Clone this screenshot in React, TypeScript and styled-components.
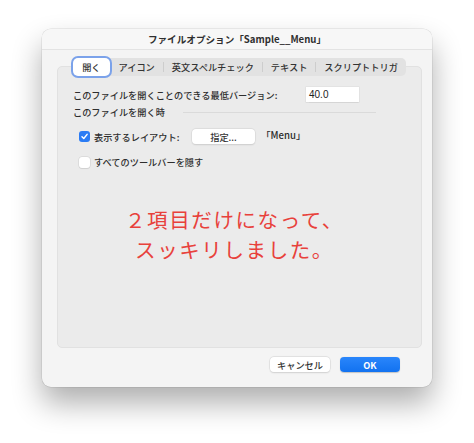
import React from "react";
import styled, { createGlobalStyle } from "styled-components";

const Global = createGlobalStyle`
  html, body { margin: 0; padding: 0; background: #ffffff; }
  body {
    font-family: "Noto Sans CJK JP", "Noto Sans", "Liberation Sans", sans-serif;
    color: #2a2a2a;
    -webkit-font-smoothing: antialiased;
  }
`;

const Page = styled.div`
  width: 474px;
  height: 443px;
  box-sizing: border-box;
  padding: 29px 0 0 42px;
`;

const Window = styled.div`
  width: 390px;
  height: 358px;
  display: flex;
  flex-direction: column;
  background: #f4f4f4;
  border-radius: 9px;
  box-shadow: 0 16px 30px rgba(0, 0, 0, 0.32), 0 0 0 0.5px rgba(0, 0, 0, 0.12);
  overflow: hidden;
`;

const TitleBar = styled.div`
  height: 20px;
  flex: none;
  display: flex;
  align-items: center;
  justify-content: center;
  background: #f7f7f7;
  border-bottom: 1px solid #e3e3e3;
  font-size: 9.6px;
  font-weight: 700;
  color: #2f2f2f;
`;

const Body = styled.div`
  flex: 1;
  display: flex;
  flex-direction: column;
  padding: 8px 10px 0 15px;
  min-height: 0;
`;

const TabBar = styled.div`
  align-self: center;
  display: flex;
  align-items: center;
  height: 18px;
  background: #e2e2e2;
  border-radius: 5px;
  position: relative;
  z-index: 1;
  margin-bottom: -10px;
`;

const Tab = styled.div<{ $active?: boolean }>`
  height: 18px;
  box-sizing: border-box;
  display: flex;
  align-items: center;
  padding: 0 ${(p) => (p.$active ? "9px" : "8px")};
  font-size: 9.2px;
  font-weight: 500;
  color: #333;
  position: relative;
  ${(p) =>
    p.$active
      ? `
    background: #ffffff;
    border-radius: 5px;
    box-shadow: 0 0 0 2px #7ba2ea;
  `
      : ""}
  & + & {
    margin-left: 1px;
  }
`;

const TabDivider = styled.div`
  width: 1px;
  height: 10px;
  background: #cdcdcd;
`;

const Panel = styled.div`
  flex: 1;
  display: flex;
  flex-direction: column;
  background: #ebebeb;
  border: 1px solid #e1e1e1;
  border-radius: 5px;
  padding: 20px 15px 0 15px;
`;

const Row = styled.div<{ $top?: number; $indent?: number; $align?: string }>`
  display: flex;
  align-items: ${(p) => p.$align ?? "center"};
  margin-top: ${(p) => p.$top ?? 0}px;
  padding-left: ${(p) => p.$indent ?? 0}px;
`;

const Label = styled.span<{ $width?: number }>`
  font-size: 9.2px;
  font-weight: 500;
  line-height: 14px;
  color: #2e2e2e;
  white-space: nowrap;
  ${(p) => (p.$width ? `width: ${p.$width}px; flex: none;` : "")}
`;

const NumberField = styled.div`
  width: 53px;
  height: 15px;
  box-sizing: border-box;
  background: #ffffff;
  box-shadow: 0 0 0 0.5px #dcdcdc, 0 0.5px 1px rgba(0, 0, 0, 0.12);
  font-family: "Liberation Sans", "Noto Sans", sans-serif;
  font-size: 10px;
  line-height: 15px;
  padding-left: 3px;
  color: #222;
`;

const SectionRule = styled.div`
  flex: 1;
  height: 1px;
  background: #dadada;
  margin: 0 30px 0 18px;
`;

const Box = styled.div<{ $checked?: boolean }>`
  width: 11px;
  height: 11px;
  flex: none;
  box-sizing: border-box;
  border-radius: 3px;
  display: flex;
  align-items: center;
  justify-content: center;
  background: ${(p) => (p.$checked ? "#2b7cf4" : "#ffffff")};
  box-shadow: ${(p) =>
    p.$checked ? "none" : "0 0 0 0.5px #cfcfcf, 0 0.5px 1px rgba(0,0,0,0.1)"};
  margin-right: 4px;
`;

const PushButton = styled.div<{ $width: number; $primary?: boolean }>`
  width: ${(p) => p.$width}px;
  height: 15px;
  flex: none;
  border-radius: 4px;
  display: flex;
  align-items: center;
  justify-content: center;
  font-size: 9.2px;
  background: ${(p) => (p.$primary ? "linear-gradient(#2a86fb, #1272f0)" : "#ffffff")};
  color: ${(p) => (p.$primary ? "#ffffff" : "#333")};
  font-weight: ${(p) => (p.$primary ? 700 : 500)};
  box-shadow: ${(p) =>
    p.$primary
      ? "0 0.5px 1px rgba(0,0,0,0.2)"
      : "0 0 0 0.5px #d6d6d6, 0 0.5px 1.5px rgba(0,0,0,0.15)"};
`;

const LayoutName = styled.span`
  font-size: 9.6px;
  font-weight: 500;
  line-height: 12px;
  margin-left: 6px;
  color: #2a2a2a;
`;

const Note = styled.div`
  margin-top: 35px;
  padding-right: 10px;
  display: flex;
  flex-direction: column;
  align-items: center;
`;

const NoteLine = styled.div`
  height: 30px;
  font-size: 20.5px;
  line-height: 30px;
  letter-spacing: 1.6px;
  color: #e8413b;
  white-space: nowrap;
`;

const Footer = styled.div`
  flex: none;
  display: flex;
  justify-content: flex-end;
  gap: 10px;
  padding: 9px 32px 15px 0;
`;

const Check = () => (
  <svg width="9" height="9" viewBox="0 0 10 10">
    <path
      d="M2.2 5.2 L4.2 7.2 L7.9 2.6"
      fill="none"
      stroke="#ffffff"
      strokeWidth="1.6"
      strokeLinecap="round"
      strokeLinejoin="round"
    />
  </svg>
);

const tabs = ["開く", "アイコン", "英文スペルチェック", "テキスト", "スクリプトトリガ"];

export default function App() {
  return (
    <>
      <Global />
      <Page>
        <Window>
          <TitleBar>ファイルオプション「Sample__Menu」</TitleBar>
          <Body>
            <TabBar>
              {tabs.map((t, i) => (
                <React.Fragment key={t}>
                  {i > 1 && <TabDivider />}
                  <Tab $active={i === 0}>{t}</Tab>
                </React.Fragment>
              ))}
            </TabBar>
            <Panel>
              <Row>
                <Label $width={233}>このファイルを開くことのできる最低バージョン:</Label>
                <NumberField>40.0</NumberField>
              </Row>
              <Row $top={3}>
                <Label>このファイルを開く時</Label>
                <SectionRule />
              </Row>
              <Row $top={10} $indent={6} $align="flex-start">
                <Row>
                  <Box $checked>
                    <Check />
                  </Box>
                  <Label $width={98}>表示するレイアウト:</Label>
                  <PushButton $width={63}>指定...</PushButton>
                </Row>
                <LayoutName>「Menu」</LayoutName>
              </Row>
              <Row $top={11} $indent={6}>
                <Box />
                <Label>すべてのツールバーを隠す</Label>
              </Row>
              <Note>
                <NoteLine>２項目だけになって、</NoteLine>
                <NoteLine>スッキリしました。</NoteLine>
              </Note>
            </Panel>
          </Body>
          <Footer>
            <PushButton $width={60}>キャンセル</PushButton>
            <PushButton $width={60} $primary>
              OK
            </PushButton>
          </Footer>
        </Window>
      </Page>
    </>
  );
}
